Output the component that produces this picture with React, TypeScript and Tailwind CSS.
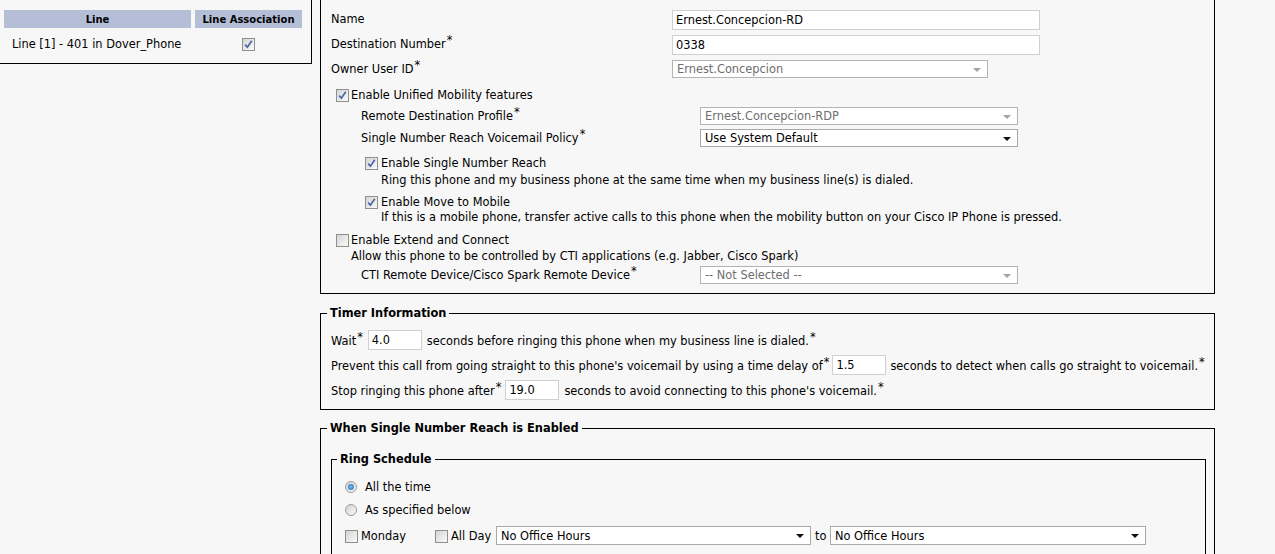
import React from "react";

function Star() {
  return <span className="relative -top-[4px] ml-[1px]">*</span>;
}

function Check({ checked }: { checked?: boolean }) {
  return (
    <span className="inline-flex h-[13px] w-[13px] shrink-0 items-center justify-center border border-[#8e8f8f] bg-linear-to-br from-[#d4d4d4] to-[#fbfbfb]">
      {checked && (
        <svg viewBox="0 0 11 11" className="h-[11px] w-[11px]">
          <path d="M2.2 5.6 L4.4 8.2 L8.8 1.8" fill="none" stroke="#4a66a6" strokeWidth="1.7" />
        </svg>
      )}
    </span>
  );
}

function Radio({ checked }: { checked?: boolean }) {
  return (
    <span className="inline-flex h-[12px] w-[12px] shrink-0 items-center justify-center rounded-full border border-[#9c9c9c] bg-linear-to-br from-[#d2d2d2] to-[#fafafa]">
      {checked && <span className="h-[6px] w-[6px] rounded-full bg-radial from-[#7cc2f2] to-[#1d5fa6]" />}
    </span>
  );
}

function Select({ value, disabled, className }: { value: string; disabled?: boolean; className: string }) {
  return (
    <div
      className={`flex shrink-0 items-center justify-between border bg-white pt-[1px] pl-[4px] pr-[6px] ${
        disabled ? "border-[#b3b3b3] text-[#6e6e6e]" : "border-[#a9a9a9] text-black"
      } ${className}`}
    >
      <span>{value}</span>
      <svg viewBox="0 0 8 4" className="h-[4px] w-[8px]">
        <path d="M0 0H8L4 4Z" fill={disabled ? "#a3a3a3" : "#111"} />
      </svg>
    </div>
  );
}

function Input({ value, className }: { value: string; className: string }) {
  return (
    <div className={`flex shrink-0 items-center border border-[#d0d0d0] bg-white px-[3px] pt-[1px] ${className}`}>
      {value}
    </div>
  );
}

export default function App() {
  return (
    <div className="flex h-[554px] w-[1275px] items-start gap-[8px] overflow-hidden bg-[#f7f7f7] font-['DejaVu_Sans',Verdana,sans-serif] text-[11.4px] leading-[13px] whitespace-nowrap text-black">
      {/* line association panel */}
      <div className="w-[312px] shrink-0 border-r border-b border-black pt-[10px] pr-[9px] pb-[12px] pl-[4px]">
        <div className="flex gap-[4px] text-[10px] font-bold">
          <div className="flex h-[18px] w-[187px] items-center justify-center bg-[#b5bed7]">Line</div>
          <div className="flex h-[18px] w-[107px] items-center justify-center bg-[#b5bed7]">Line Association</div>
        </div>
        <div className="mt-[9px] flex h-[14px] items-center">
          <div className="w-[191px] pl-[8px]">Line [1] - 401 in Dover_Phone</div>
          <div className="flex w-[107px] justify-center">
            <Check checked />
          </div>
        </div>
      </div>

      {/* forms */}
      <div className="w-[895px] shrink-0">
        <div className="border-x border-b border-black pt-[10px] pb-[9px] pl-[10px]">
          <div className="flex h-[20px] items-center">
            <div className="w-[341px] -translate-y-[1px]">Name</div>
            <Input value="Ernest.Concepcion-RD" className="h-[20px] w-[368px]" />
          </div>
          <div className="mt-[5px] flex h-[20px] items-center">
            <div className="w-[341px] -translate-y-[1px]">
              Destination Number<Star />
            </div>
            <Input value="0338" className="h-[20px] w-[368px]" />
          </div>
          <div className="mt-[5px] flex h-[18px] items-center">
            <div className="w-[341px] pt-[1px]">
              Owner User ID<Star />
            </div>
            <Select value="Ernest.Concepcion" disabled className="h-[18px] w-[316px]" />
          </div>
          <div className="mt-[9px] flex h-[14px] items-center gap-[2px] pt-[2px] pl-[5px]">
            <Check checked />
            <span>Enable Unified Mobility features</span>
          </div>
          <div className="mt-[6px] flex h-[18px] items-center pl-[30px]">
            <div className="w-[339px]">
              Remote Destination Profile<Star />
            </div>
            <Select value="Ernest.Concepcion-RDP" disabled className="h-[18px] w-[318px]" />
          </div>
          <div className="mt-[4px] flex h-[18px] items-center pl-[30px]">
            <div className="w-[339px]">
              Single Number Reach Voicemail Policy<Star />
            </div>
            <Select value="Use System Default" className="h-[18px] w-[318px]" />
          </div>
          <div className="mt-[8px] flex h-[14px] items-center gap-[3px] pt-[2px] pl-[34px]">
            <Check checked />
            <span>Enable Single Number Reach</span>
          </div>
          <div className="mt-[3px] flex h-[14px] items-center pt-[2px] pl-[50px]">
            Ring this phone and my business phone at the same time when my business line(s) is dialed.
          </div>
          <div className="mt-[8px] flex h-[14px] items-center gap-[3px] pt-[2px] pl-[34px]">
            <Check checked />
            <span>Enable Move to Mobile</span>
          </div>
          <div className="mt-[1px] flex h-[14px] items-center pt-[2px] pl-[50px]">
            If this is a mobile phone, transfer active calls to this phone when the mobility button on your Cisco IP Phone is pressed.
          </div>
          <div className="mt-[9px] flex h-[14px] items-center gap-[2px] pt-[2px] pl-[5px]">
            <Check />
            <span>Enable Extend and Connect</span>
          </div>
          <div className="mt-[2px] flex h-[14px] items-center pt-[2px] pl-[20px]">
            Allow this phone to be controlled by CTI applications (e.g. Jabber, Cisco Spark)
          </div>
          <div className="mt-[4px] flex h-[18px] items-center pl-[30px]">
            <div className="w-[339px]">
              CTI Remote Device/Cisco Spark Remote Device<Star />
            </div>
            <Select value="-- Not Selected --" disabled className="h-[18px] w-[318px]" />
          </div>
        </div>

        <fieldset className="mt-[13px] min-w-0 border border-black pr-[8px] pb-[9px] pl-[6px]">
          <legend className="px-[3px] font-bold">Timer Information</legend>
          <div className="pl-[4px]">
            <div className="mt-[10px] flex h-[20px] items-center">
              <span className="pt-[2px]">
                Wait<Star />
              </span>
              <Input value="4.0" className="ml-[5px] h-[20px] w-[54px]" />
              <span className="ml-[5px] pt-[2px]">
                seconds before ringing this phone when my business line is dialed.<Star />
              </span>
            </div>
            <div className="mt-[5px] flex h-[20px] items-center">
              <span className="pt-[2px]">
                Prevent this call from going straight to this phone's voicemail by using a time delay of<Star />
              </span>
              <Input value="1.5" className="ml-[3px] h-[20px] w-[54px]" />
              <span className="ml-[4px] pt-[2px]">
                seconds to detect when calls go straight to voicemail.<Star />
              </span>
            </div>
            <div className="mt-[5px] flex h-[20px] items-center">
              <span className="pt-[2px]">
                Stop ringing this phone after<Star />
              </span>
              <Input value="19.0" className="ml-[4px] h-[20px] w-[54px]" />
              <span className="ml-[5px] pt-[2px]">
                seconds to avoid connecting to this phone's voicemail.<Star />
              </span>
            </div>
          </div>
        </fieldset>

        <fieldset className="mt-[12px] min-w-0 border border-black pr-[8px] pb-[9px] pl-[6px]">
          <legend className="px-[3px] font-bold">When Single Number Reach is Enabled</legend>
          <fieldset className="mt-[18px] ml-[4px] min-w-0 border border-black pr-[8px] pb-[9px] pl-[5px]">
            <legend className="px-[3px] font-bold">Ring Schedule</legend>
            <div className="pl-[8px]">
              <div className="mt-[13px] flex h-[14px] items-center gap-[8px] pt-[2px]">
                <Radio checked />
                <span>All the time</span>
              </div>
              <div className="mt-[9px] flex h-[14px] items-center gap-[8px] pt-[2px]">
                <Radio />
                <span>As specified below</span>
              </div>
              {["Monday", ""].map((day) => (
                <div key={day || "next"} className="mt-[10px] flex h-[19px] items-center">
                  <div className="flex w-[90px] items-center gap-[3px] pt-[1px]">
                    <Check />
                    <span>{day}</span>
                  </div>
                  <div className="flex w-[61px] items-center gap-[3px] pt-[1px]">
                    <Check />
                    <span>{day && "All Day"}</span>
                  </div>
                  <Select value={day ? "No Office Hours" : ""} className="h-[19px] w-[315px]" />
                  <span className="w-[19px] pt-[1px] pl-[4px]">{day && "to"}</span>
                  <Select value={day ? "No Office Hours" : ""} className="h-[19px] w-[316px]" />
                </div>
              ))}
            </div>
          </fieldset>
        </fieldset>
      </div>
    </div>
  );
}
